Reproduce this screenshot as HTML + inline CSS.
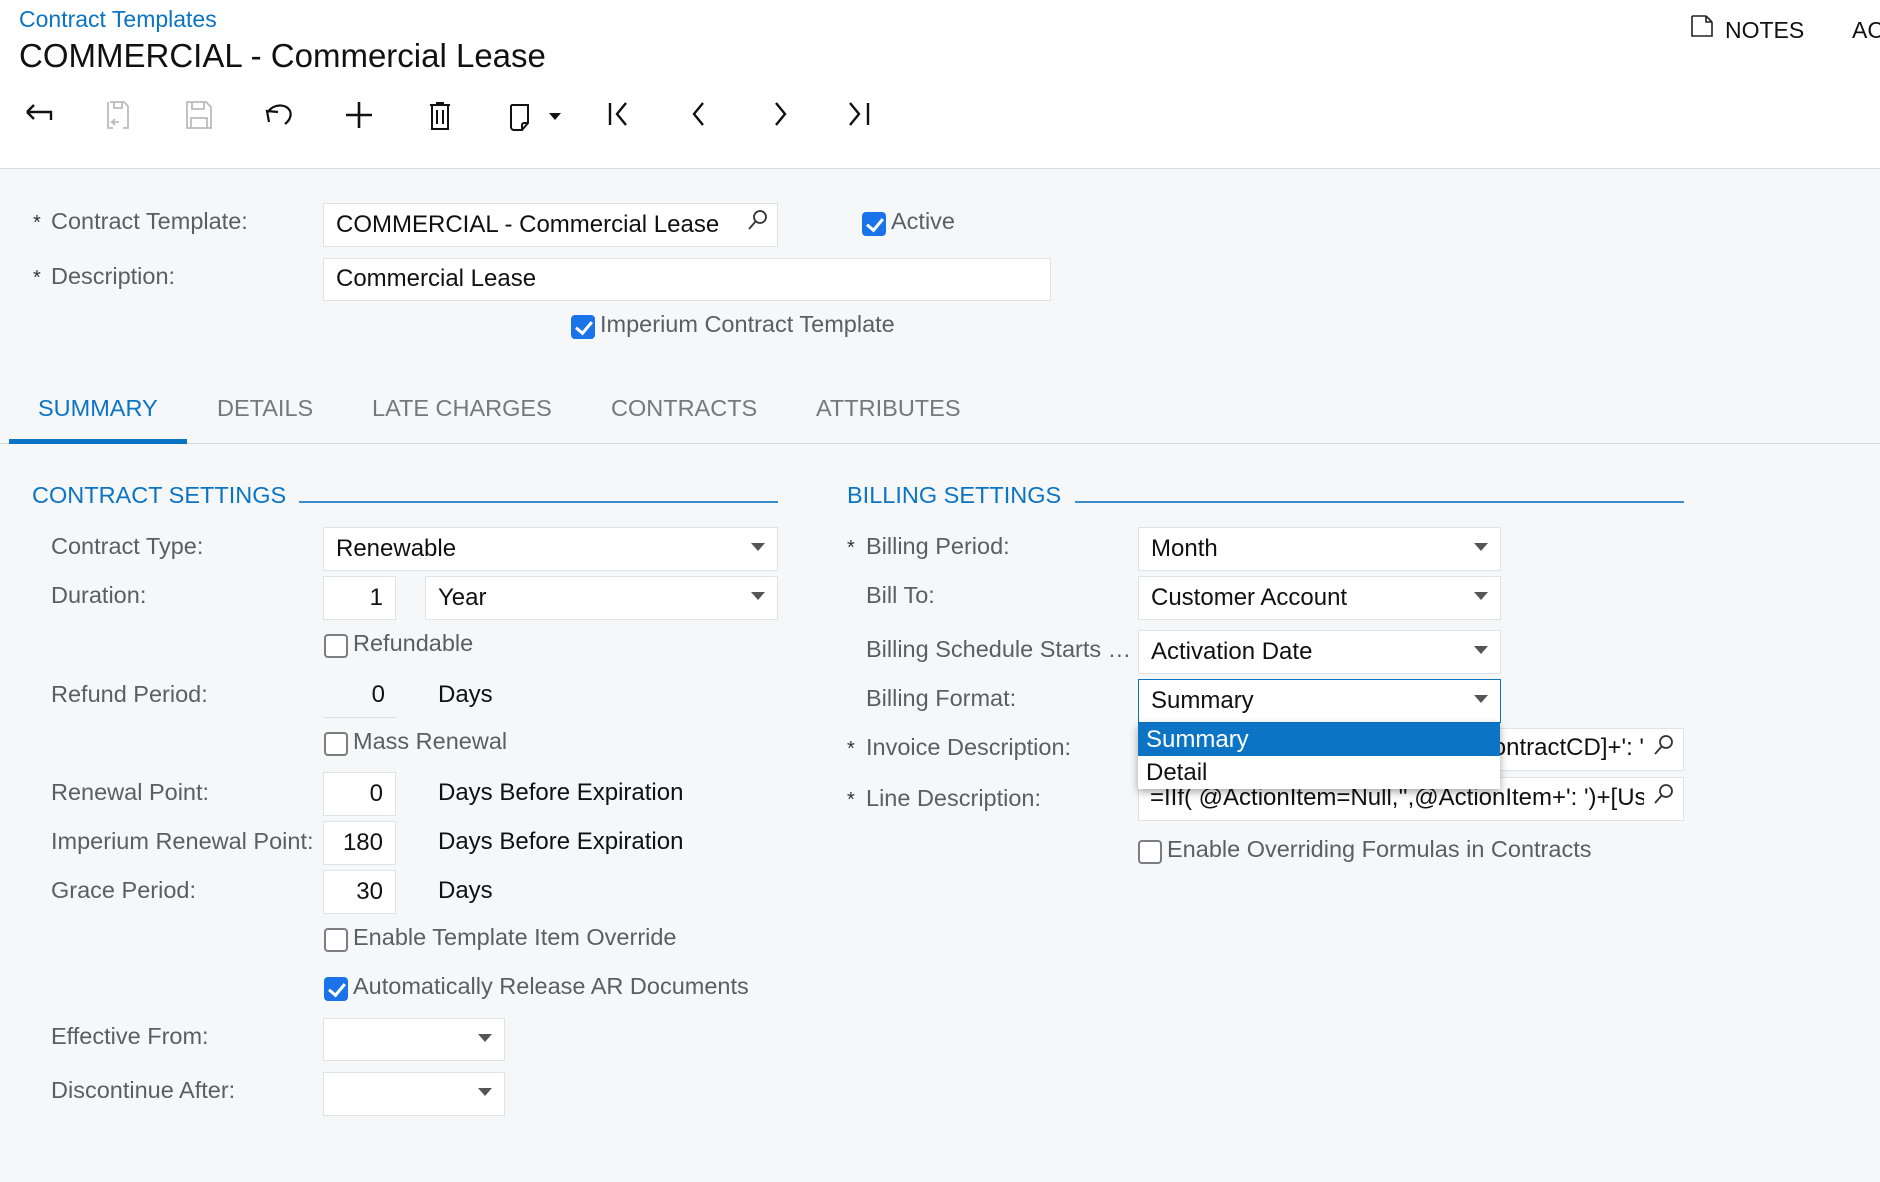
<!DOCTYPE html>
<html><head><meta charset="utf-8"><style>
*{box-sizing:border-box;margin:0;padding:0}
body{width:1880px;height:1182px;overflow:hidden;background:#f5f7f9;font-family:"Liberation Sans",Arial,sans-serif;position:relative}
.a{position:absolute;white-space:nowrap}
.hdr{position:absolute;left:0;top:0;width:1880px;height:169px;background:#fff;border-bottom:1px solid #d8dce0}
.lbl{position:absolute;font-size:23.5px;color:#5b5e63;white-space:nowrap}
.ast{position:absolute;font-size:20px;color:#333}
.in{position:absolute;background:#fff;border:1.5px solid #dfe2e6;font-size:24px;color:#111;padding-left:12px;white-space:nowrap;overflow:hidden}
.num{text-align:right;padding-right:12px;padding-left:0}
.dd::after{content:"";position:absolute;right:12px;top:50%;margin-top:-6px;border-left:7px solid transparent;border-right:7px solid transparent;border-top:8px solid #555}
.cb{position:absolute;width:24px;height:24px;border:2px solid #7a7d82;border-radius:4px;background:#fff}
.cb.on{background:#1a73e8;border-color:#1a73e8}
.cb.on::after{content:"";position:absolute;left:6px;top:1px;width:7px;height:13px;border:solid #fff;border-width:0 3px 3px 0;transform:rotate(40deg)}
.cbt{position:absolute;font-size:23.5px;color:#5b5e63;white-space:nowrap}
.tab{position:absolute;top:395px;font-size:23.5px;color:#75787c}
.sec{position:absolute;font-size:23.5px;color:#0b74c4}
.txt{position:absolute;font-size:24px;color:#111;white-space:nowrap}
svg{position:absolute}
.clip{position:absolute;overflow:hidden;white-space:nowrap;font-size:24px;color:#111}
</style></head><body>
<div class="hdr"></div>
<div class="a" style="left:19px;top:6px;font-size:23px;color:#0b74c4">Contract Templates</div>
<div class="a" style="left:19px;top:37px;font-size:33px;color:#111">COMMERCIAL - Commercial Lease</div>
<svg style="left:1690px;top:14px" width="24" height="24" viewBox="0 0 24 24"><path d="M2 2v20h20V8M16 2v6h6M16 2l6 6M2 2h14" fill="none" stroke="#222" stroke-width="1.6"/></svg>
<div class="a" style="left:1725px;top:17px;font-size:23px;color:#111">NOTES</div>
<div class="a" style="left:1852px;top:17px;font-size:23px;color:#111">AC</div>
<!-- toolbar -->
<svg style="left:24px;top:100px" width="32" height="28" viewBox="0 0 32 28" fill="none" stroke="#111" stroke-width="2.4"><path d="M3 12h24v8M3 12l7-7M3 12l7 7"/></svg>
<svg style="left:104px;top:100px" width="28" height="30" viewBox="0 0 28 30" fill="none" stroke="#bbb" stroke-width="1.8"><path d="M6 2h14l4 4v22h-5M9 28H4V2M10 2v6h8V2M15 22H8l3-3M8 22l3 3"/></svg>
<svg style="left:185px;top:100px" width="28" height="30" viewBox="0 0 28 30" fill="none" stroke="#bbb" stroke-width="1.8"><path d="M2 2h19l5 5v21H2zM7 2v7h12V2M6 28v-10h16v10"/></svg>
<svg style="left:264px;top:100px" width="30" height="28" viewBox="0 0 30 28" fill="none" stroke="#111" stroke-width="2.2"><path d="M5 22L3 11l11 1M4 12C9 4 22 3 26 11c2 5-1 10-5 13"/></svg>
<svg style="left:344px;top:100px" width="30" height="30" viewBox="0 0 30 30" stroke="#111" stroke-width="2.6"><path d="M15 2v26M2 15h26"/></svg>
<svg style="left:428px;top:101px" width="24" height="30" viewBox="0 0 24 30" fill="none" stroke="#111" stroke-width="2"><path d="M4 4h16v24H4zM2 4h20M9 9v14M15 9v14M8 2h8"/></svg>
<svg style="left:506px;top:102px" width="28" height="30" viewBox="0 0 28 30" fill="none" stroke="#111" stroke-width="2"><path d="M6 3h16v18l-6 7H8a3 3 0 01-3-3V4zM16 28v-5a2 2 0 012-2h4"/></svg>
<svg style="left:548px;top:111px" width="14" height="10"><path d="M1 2h12L7 9z" fill="#111"/></svg>
<svg style="left:606px;top:101px" width="26" height="26" viewBox="0 0 26 26" fill="none" stroke="#111" stroke-width="2.4"><path d="M4 2v22M20 2L11 13l9 11"/></svg>
<svg style="left:689px;top:101px" width="20" height="26" viewBox="0 0 20 26" fill="none" stroke="#111" stroke-width="2.4"><path d="M14 2L5 13l9 11"/></svg>
<svg style="left:770px;top:101px" width="20" height="26" viewBox="0 0 20 26" fill="none" stroke="#111" stroke-width="2.4"><path d="M6 2l9 11-9 11"/></svg>
<svg style="left:847px;top:101px" width="26" height="26" viewBox="0 0 26 26" fill="none" stroke="#111" stroke-width="2.4"><path d="M3 2l9 11-9 11M21 2v22"/></svg>
<!-- top form -->
<div class="ast" style="left:33px;top:212px">*</div><div class="lbl" style="left:51px;top:208px">Contract Template:</div>
<div class="in" style="left:323px;top:203px;width:455px;height:44px;line-height:41px">COMMERCIAL - Commercial Lease</div>
<svg style="left:746px;top:208px" width="24" height="24" viewBox="0 0 24 24" fill="none" stroke="#333" stroke-width="1.8"><circle cx="14" cy="9" r="6"/><path d="M10 13l-7 8"/></svg>
<div class="cb on" style="left:862px;top:212px"></div><div class="cbt" style="left:891px;top:208px">Active</div>
<div class="ast" style="left:33px;top:267px">*</div><div class="lbl" style="left:51px;top:263px">Description:</div>
<div class="in" style="left:323px;top:258px;width:728px;height:43px;line-height:40px">Commercial Lease</div>
<div class="cb on" style="left:571px;top:315px"></div><div class="cbt" style="left:600px;top:311px">Imperium Contract Template</div>
<!-- tabs -->
<div class="tab" style="left:38px;color:#0b74c4">SUMMARY</div>
<div class="tab" style="left:217px">DETAILS</div>
<div class="tab" style="left:372px">LATE CHARGES</div>
<div class="tab" style="left:611px">CONTRACTS</div>
<div class="tab" style="left:816px">ATTRIBUTES</div>
<div class="a" style="left:0;top:443px;width:1880px;height:1px;background:#d4d8dc"></div>
<div class="a" style="left:9px;top:439px;width:178px;height:5px;background:#0b74c4"></div>
<!-- sections -->
<div class="sec" style="left:32px;top:482px">CONTRACT SETTINGS</div>
<div class="a" style="left:299px;top:501px;width:479px;height:1.5px;background:#3a8ccc"></div>
<div class="sec" style="left:847px;top:482px">BILLING SETTINGS</div>
<div class="a" style="left:1075px;top:501px;width:609px;height:1.5px;background:#3a8ccc"></div>
<!-- left col -->
<div class="lbl" style="left:51px;top:533px">Contract Type:</div>
<div class="in dd" style="left:323px;top:527px;width:455px;height:44px;line-height:41px">Renewable</div>
<div class="lbl" style="left:51px;top:582px">Duration:</div>
<div class="in num" style="left:323px;top:576px;width:73px;height:44px;line-height:41px">1</div>
<div class="in dd" style="left:425px;top:576px;width:353px;height:44px;line-height:41px">Year</div>
<div class="cb" style="left:324px;top:634px"></div><div class="cbt" style="left:353px;top:630px">Refundable</div>
<div class="lbl" style="left:51px;top:681px">Refund Period:</div>
<div class="txt" style="left:323px;width:62px;text-align:right;top:681px">0</div>
<div class="a" style="left:323px;top:717px;width:73px;height:1px;background:#ddd"></div>
<div class="txt" style="left:438px;top:681px">Days</div>
<div class="cb" style="left:324px;top:732px"></div><div class="cbt" style="left:353px;top:728px">Mass Renewal</div>
<div class="lbl" style="left:51px;top:779px">Renewal Point:</div>
<div class="in num" style="left:323px;top:772px;width:73px;height:44px;line-height:41px">0</div>
<div class="txt" style="left:438px;top:779px">Days Before Expiration</div>
<div class="lbl" style="left:51px;top:828px">Imperium Renewal Point:</div>
<div class="in num" style="left:323px;top:821px;width:73px;height:44px;line-height:41px">180</div>
<div class="txt" style="left:438px;top:828px">Days Before Expiration</div>
<div class="lbl" style="left:51px;top:877px">Grace Period:</div>
<div class="in num" style="left:323px;top:870px;width:73px;height:44px;line-height:41px">30</div>
<div class="txt" style="left:438px;top:877px">Days</div>
<div class="cb" style="left:324px;top:928px"></div><div class="cbt" style="left:353px;top:924px">Enable Template Item Override</div>
<div class="cb on" style="left:324px;top:977px"></div><div class="cbt" style="left:353px;top:973px">Automatically Release AR Documents</div>
<div class="lbl" style="left:51px;top:1023px">Effective From:</div>
<div class="in dd" style="left:323px;top:1018px;width:182px;height:43px"></div>
<div class="lbl" style="left:51px;top:1077px">Discontinue After:</div>
<div class="in dd" style="left:323px;top:1072px;width:182px;height:44px"></div>
<!-- right col -->
<div class="ast" style="left:847px;top:537px">*</div><div class="lbl" style="left:866px;top:533px">Billing Period:</div>
<div class="in dd" style="left:1138px;top:527px;width:363px;height:44px;line-height:41px">Month</div>
<div class="lbl" style="left:866px;top:582px">Bill To:</div>
<div class="in dd" style="left:1138px;top:576px;width:363px;height:44px;line-height:41px">Customer Account</div>
<div class="lbl" style="left:866px;top:636px">Billing Schedule Starts …</div>
<div class="in dd" style="left:1138px;top:630px;width:363px;height:44px;line-height:41px">Activation Date</div>
<div class="lbl" style="left:866px;top:685px">Billing Format:</div>
<div class="in dd" style="left:1138px;top:679px;width:363px;height:44px;line-height:41px;border:1.5px solid #0b74c4">Summary</div>
<div class="ast" style="left:847px;top:738px">*</div><div class="lbl" style="left:866px;top:734px">Invoice Description:</div>
<div class="in" style="left:1138px;top:728px;width:546px;height:43px"></div>
<div class="clip" style="left:1150px;top:734px;width:494px;height:32px;direction:rtl;text-align:right"><span style="direction:ltr;unicode-bidi:bidi-override">=IIf( @ActionItem=Null,'',@ActionItem+': ')+[ContractCD]+': '</span></div>
<div class="ast" style="left:847px;top:789px">*</div><div class="lbl" style="left:866px;top:785px">Line Description:</div>
<div class="in" style="left:1138px;top:777px;width:546px;height:44px"></div>
<div class="clip" style="left:1150px;top:784px;width:494px;height:32px">=IIf( @ActionItem=Null,'',@ActionItem+': ')+[UsageDescription]</div>
<svg style="left:1652px;top:733px" width="24" height="24" viewBox="0 0 24 24" fill="none" stroke="#333" stroke-width="1.8"><circle cx="14" cy="9" r="6"/><path d="M10 13l-7 8"/></svg>
<svg style="left:1652px;top:782px" width="24" height="24" viewBox="0 0 24 24" fill="none" stroke="#333" stroke-width="1.8"><circle cx="14" cy="9" r="6"/><path d="M10 13l-7 8"/></svg>
<div class="cb" style="left:1138px;top:840px"></div><div class="cbt" style="left:1167px;top:836px">Enable Overriding Formulas in Contracts</div>
<!-- dropdown -->
<div class="a" style="left:1138px;top:723px;width:362px;height:66px;background:#fff;box-shadow:0 3px 8px rgba(0,0,0,.35)">
<div style="height:33px;background:#0b74c4;color:#fff;font-size:24px;line-height:33px;padding-left:8px">Summary</div>
<div style="height:33px;color:#111;font-size:24px;line-height:33px;padding-left:8px">Detail</div>
</div>
</body></html>
